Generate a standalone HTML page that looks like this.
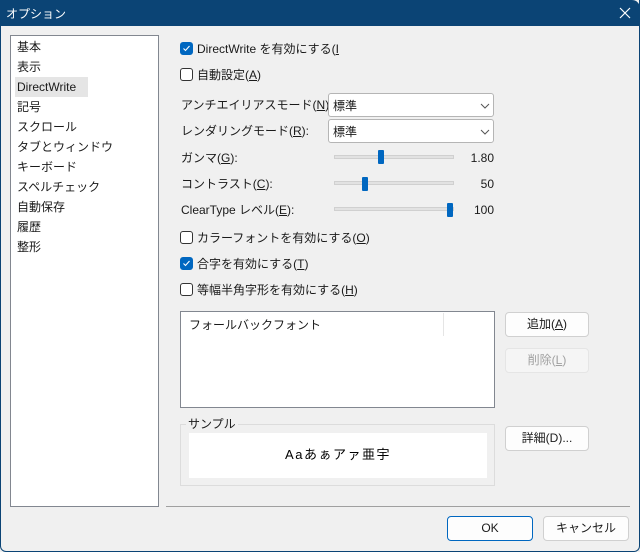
<!DOCTYPE html>
<html><head><meta charset="utf-8"><style>
*{margin:0;padding:0;box-sizing:border-box}
body{width:640px;height:552px;overflow:hidden;background:#f0f0f0;font-family:"Liberation Sans","Noto Sans CJK JP",sans-serif;font-size:12px;color:#1a1a1a;position:relative}
.a{position:absolute;white-space:nowrap}
.win{position:absolute;left:0;top:0;width:640px;height:552px;border:1px solid #0b4475;border-top:none;border-radius:0 0 6px 6px}
.title{position:absolute;left:0;top:0;width:640px;height:26px;background:#0b4475;color:#fff;border-radius:0 8px 0 0}
.t{line-height:16px;transform:translateY(-8px)}
.cb{position:absolute;width:13px;height:13px;border:1px solid #333;border-radius:3px;background:#fff}
.cb.on{background:#0067c0;border-color:#0067c0}
.combo{position:absolute;left:328px;width:166px;height:24px;background:#fff;border:1px solid #b5b5b5;border-radius:3px}
.track{position:absolute;left:334px;width:120px;height:4px;background:#e2e2e2;border:1px solid #d0d0d0}
.thumb{position:absolute;width:6px;height:14px;background:#0067c0;border-radius:1px}
.btn{position:absolute;left:505px;width:84px;height:25px;background:#fdfdfd;border:1px solid #d0d0d0;border-radius:4px;text-align:center;line-height:23px}
u{text-decoration:underline}
</style></head><body>
<div class="title"><div class="a" style="left:6px;top:5px;font-size:12px">オプション</div>
<svg class="a" style="left:619px;top:7px" width="12" height="12"><path d="M1 1L11 11M11 1L1 11" stroke="#fff" stroke-width="1.2"/></svg></div>
<div class="win"></div>

<div class="a" style="left:10px;top:35px;width:149px;height:472px;background:#fff;border:1px solid #828790"></div>
<div class="a" style="left:15px;top:77px;width:73px;height:20px;background:#e5e5e5"></div>
<div class="a t" style="left:17px;top:47px">基本</div>
<div class="a t" style="left:17px;top:67px">表示</div>
<div class="a t" style="left:17px;top:87px">DirectWrite</div>
<div class="a t" style="left:17px;top:107px">記号</div>
<div class="a t" style="left:17px;top:127px">スクロール</div>
<div class="a t" style="left:17px;top:147px">タブとウィンドウ</div>
<div class="a t" style="left:17px;top:167px">キーボード</div>
<div class="a t" style="left:17px;top:187px">スペルチェック</div>
<div class="a t" style="left:17px;top:207px">自動保存</div>
<div class="a t" style="left:17px;top:227px">履歴</div>
<div class="a t" style="left:17px;top:247px">整形</div>

<div class="cb on" style="left:180px;top:42px"><svg width="11" height="11" style="position:absolute;left:0;top:0"><path d="M2.5 5.5L4.5 7.5L8.5 3" stroke="#fff" fill="none" stroke-width="1.1"/></svg></div>
<div class="a t" style="left:197px;top:49px">DirectWrite を有効にする(<u>I</u></div>
<div class="cb" style="left:180px;top:68px"></div>
<div class="a t" style="left:197px;top:75px">自動設定(<u>A</u>)</div>

<div class="a t" style="left:181px;top:105px">アンチエイリアスモード(<u>N</u>)</div>
<div class="combo" style="top:93px"><div class="a t" style="left:4px;top:12px">標準</div><svg class="a" style="left:151px;top:9px" width="10" height="6"><path d="M1 1L5 5L9 1" stroke="#555" fill="none"/></svg></div>
<div class="a t" style="left:181px;top:131px">レンダリングモード(<u>R</u>):</div>
<div class="combo" style="top:119px"><div class="a t" style="left:4px;top:12px">標準</div><svg class="a" style="left:151px;top:9px" width="10" height="6"><path d="M1 1L5 5L9 1" stroke="#555" fill="none"/></svg></div>

<div class="a t" style="left:181px;top:158px">ガンマ(<u>G</u>):</div>
<div class="track" style="top:155px"></div><div class="thumb" style="left:378px;top:150px"></div>
<div class="a t" style="left:440px;top:158px;width:54px;text-align:right">1.80</div>
<div class="a t" style="left:181px;top:184px">コントラスト(<u>C</u>):</div>
<div class="track" style="top:181px"></div><div class="thumb" style="left:362px;top:177px"></div>
<div class="a t" style="left:440px;top:184px;width:54px;text-align:right">50</div>
<div class="a t" style="left:181px;top:210px">ClearType レベル(<u>E</u>):</div>
<div class="track" style="top:207px"></div><div class="thumb" style="left:447px;top:203px"></div>
<div class="a t" style="left:440px;top:210px;width:54px;text-align:right">100</div>

<div class="cb" style="left:180px;top:231px"></div>
<div class="a t" style="left:197px;top:238px">カラーフォントを有効にする(<u>O</u>)</div>
<div class="cb on" style="left:180px;top:257px"><svg width="11" height="11" style="position:absolute;left:0;top:0"><path d="M2.5 5.5L4.5 7.5L8.5 3" stroke="#fff" fill="none" stroke-width="1.1"/></svg></div>
<div class="a t" style="left:197px;top:264px">合字を有効にする(<u>T</u>)</div>
<div class="cb" style="left:180px;top:283px"></div>
<div class="a t" style="left:197px;top:290px">等幅半角字形を有効にする(<u>H</u>)</div>

<div class="a" style="left:180px;top:311px;width:315px;height:97px;background:#fff;border:1px solid #828790"></div>
<div class="a t" style="left:189px;top:325px">フォールバックフォント</div>
<div class="a" style="left:443px;top:313px;width:1px;height:23px;background:#e5e5e5"></div>

<div class="btn" style="top:312px">追加(<u>A</u>)</div>
<div class="btn" style="top:348px;color:#a0a0a0;background:#f5f5f5;border-color:#e5e5e5">削除(<u>L</u>)</div>
<div class="btn" style="top:426px">詳細(D)...</div>

<div class="a" style="left:180px;top:424px;width:315px;height:62px;border:1px solid #dcdcdc"></div>
<div class="a t" style="left:186px;top:424px;background:#f0f0f0;padding:0 2px">サンプル</div>
<div class="a" style="left:189px;top:433px;width:298px;height:45px;background:#fff"></div>
<div class="a t" style="left:189px;top:455px;width:298px;text-align:center;font-size:13px;color:#000;letter-spacing:1.5px">Aaあぁアァ亜宇</div>

<div class="a" style="left:166px;top:506px;width:464px;height:1px;background:#a0a0a0"></div>
<div class="a" style="left:447px;top:516px;width:86px;height:25px;background:#fdfdfd;border:1px solid #0067c0;border-radius:4px;text-align:center;line-height:23px">OK</div>
<div class="a" style="left:543px;top:516px;width:86px;height:25px;background:#fdfdfd;border:1px solid #d0d0d0;border-radius:4px;text-align:center;line-height:23px">キャンセル</div>
</body></html>
